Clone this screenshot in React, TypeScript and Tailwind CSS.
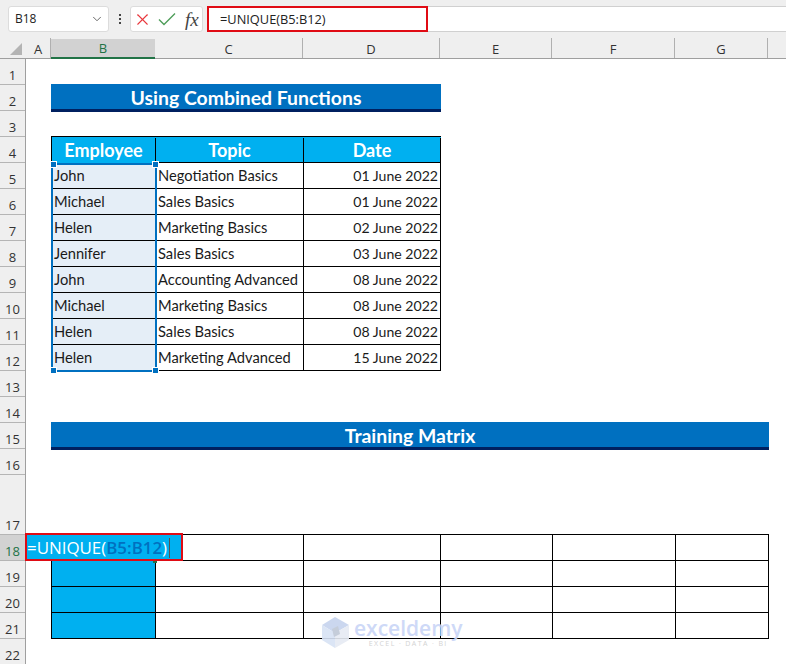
import React from 'react';
import { ChevronDown, X } from 'lucide-react';

const ui = 'font-["Open_Sans",sans-serif]';
const cellFont = 'font-["Lato",sans-serif]';

const employees: [string, string, string][] = [
  ['John', 'Negotiation Basics', '01 June 2022'],
  ['Michael', 'Sales Basics', '01 June 2022'],
  ['Helen', 'Marketing Basics', '02 June 2022'],
  ['Jennifer', 'Sales Basics', '03 June 2022'],
  ['John', 'Accounting Advanced', '08 June 2022'],
  ['Michael', 'Marketing Basics', '08 June 2022'],
  ['Helen', 'Sales Basics', '08 June 2022'],
  ['Helen', 'Marketing Advanced', '15 June 2022'],
];

const columns = [
  { label: 'A', w: 'w-[25px]' },
  { label: 'B', w: 'w-[104px]', active: true },
  { label: 'C', w: 'w-[148px]' },
  { label: 'D', w: 'w-[137px]' },
  { label: 'E', w: 'w-[112px]' },
  { label: 'F', w: 'w-[123px]' },
  { label: 'G', w: 'w-[93px]' },
];

const rowNumbers = Array.from({ length: 22 }, (_, i) => i + 1);

function FormulaBar() {
  return (
    <div className={`flex h-[32px] items-stretch bg-[#efefef] pt-[6px] pl-[8px] ${ui}`}>
      <div className="flex w-[101px] items-center justify-between rounded-[3px] border border-[#dcdcdc] bg-white pr-[4px] pl-[6px] text-[12px] text-[#222]">
        B18
        <ChevronDown size={14} strokeWidth={1.5} className="text-[#555]" />
      </div>
      <div className="flex w-[21px] flex-col items-center justify-center gap-[2px]">
        <span className="h-[2px] w-[2px] bg-[#444]" />
        <span className="h-[2px] w-[2px] bg-[#444]" />
        <span className="h-[2px] w-[2px] bg-[#444]" />
      </div>
      <div className="flex w-[73px] items-center rounded-[3px] border border-[#dcdcdc] bg-white pl-[2px]">
        <X size={19} strokeWidth={1.4} className="text-[#e8383d]" />
        <svg width="18" height="14" viewBox="0 0 18 14" className="ml-[6px]">
          <path d="M1 7.5 L6 12.5 L17 1.5" fill="none" stroke="#4f9e5a" strokeWidth="1.4" />
        </svg>
        <span className='ml-[9px] font-["Liberation_Serif",serif] text-[19px] leading-none text-[#444] italic'>fx</span>
      </div>
      <div className="ml-[4px] flex flex-1 border-t border-b border-t-[#d0d0d0] border-b-[#d0d0d0] bg-white">
        <div className="-my-px flex w-[221px] items-center border-2 border-[#e00b14] pt-px pl-[11px] text-[12.8px] text-[#222]">
          =UNIQUE(B5:B12)
        </div>
      </div>
    </div>
  );
}

function ColumnHeader() {
  return (
    <div className={`flex h-[27px] items-end border-b border-[#9f9f9f] bg-[#efefef] text-[13px] leading-[16px] text-[#333] ${ui}`}>
      <div className="relative h-full w-[26px] border-r border-transparent">
        <span className="absolute right-[3px] bottom-[3px] h-0 w-0 border-b-[12px] border-l-[12px] border-b-[#b4b4b4] border-l-transparent" />
      </div>
      {columns.map((c) =>
        c.active ? (
          <div
            key={c.label}
            className={`-mb-px flex h-[20px] items-center justify-center border-b-2 border-[#217346] bg-[#d2d2d2] text-[#217346] ${c.w}`}
          >
            {c.label}
          </div>
        ) : (
          <div key={c.label} className={`flex h-[20px] items-center justify-center border-r border-[#b0b0b0] pt-px ${c.w}`}>
            {c.label}
          </div>
        ),
      )}
    </div>
  );
}

function RowGutter() {
  return (
    <div className={`w-[26px] shrink-0 border-r border-[#9f9f9f] bg-[#efefef] text-[13px] leading-[16px] text-[#333] ${ui}`}>
      {rowNumbers.map((n) => (
        <div
          key={n}
          className={`flex items-end justify-center border-b border-[#b5b5b5] pb-px ${n === 17 ? 'h-[60px]' : 'h-[26px]'} ${n === 18 ? 'bg-[#d2d2d2] text-[#217346]' : ''}`}
        >
          {n}
        </div>
      ))}
    </div>
  );
}

function Banner({ title, width }: { title: string; width: string }) {
  return (
    <div
      className={`flex h-[28px] items-center justify-center border-b-[3px] border-[#002060] bg-[#0070c0] pt-[2px] text-[19.4px] font-bold text-white ${width} ${cellFont}`}
    >
      {title}
    </div>
  );
}

function Handle({ pos }: { pos: string }) {
  return <span className={`absolute h-[7px] w-[7px] border border-white bg-[#0070c0] ${pos}`} />;
}

function EmployeeTable() {
  return (
    <div className={`relative w-[390px] border-t border-l border-black text-[14.7px] text-[#1a1a1a] ${cellFont}`}>
      <div className="flex h-[26px] bg-[#00b0f0] pt-px text-[18px] font-bold text-white">
        <div className="flex w-[104px] items-center justify-center border-r border-black">Employee</div>
        <div className="flex w-[148px] items-center justify-center border-r border-b border-black">Topic</div>
        <div className="flex w-[137px] items-center justify-center border-r border-b border-black">Date</div>
      </div>
      {employees.map(([name, topic, date], i) => (
        <div key={i} className="flex h-[26px]">
          <div className="flex w-[104px] items-center border-r border-b border-black bg-[#e5eef7] pl-[2px]">{name}</div>
          <div className="flex w-[148px] items-center border-r border-b border-black pl-[2px]">{topic}</div>
          <div className="flex w-[137px] items-center justify-end border-r border-b border-black pr-[2px] text-[14.1px]">{date}</div>
        </div>
      ))}
      {/* range selection B5:B12 */}
      <div className="pointer-events-none absolute top-[26px] -left-px h-[209px] w-[106px] border-2 border-[#0070c0]">
        <Handle pos="-top-[4px] -left-[3px]" />
        <Handle pos="-top-[4px] -right-[4px]" />
        <Handle pos="-bottom-[4px] -left-[3px]" />
        <Handle pos="-bottom-[4px] -right-[4px]" />
      </div>
    </div>
  );
}

function MatrixTable() {
  const rest = ['w-[148px]', 'w-[137px]', 'w-[112px]', 'w-[123px]', 'w-[93px]'];
  return (
    <div className="w-[718px] border-t border-l border-black">
      {[18, 19, 20, 21].map((r) => (
        <div key={r} className="flex h-[26px]">
          <div className="w-[104px] border-r border-b border-black bg-[#00b0f0] last:border-b-0" />
          {rest.map((w) => (
            <div key={w} className={`border-r border-b border-black ${w}`} />
          ))}
        </div>
      ))}
    </div>
  );
}

function Watermark() {
  return (
    <div className="pointer-events-none absolute top-[616px] left-[321px] flex opacity-90">
      <svg width="30" height="32" viewBox="0 0 30 32">
        <path d="M14 1 L28 9 L14 17 L1 9 Z" fill="#c6d3ee" />
        <path d="M1 9 L14 17 L14 32 L1 24 Z" fill="#d8e3f5" />
        <path d="M28 9 L14 17 L14 32 L28 24 Z" fill="#e6ebf3" />
        <path d="M11 13 L17 10 L19 18 L13 21 Z" fill="#bfc8d6" />
      </svg>
      <div className="ml-[3px] flex flex-col items-center">
        <span className='font-["Open_Sans",sans-serif] text-[21px] leading-[24px] font-semibold text-[#c9d5f7]'>exceldemy</span>
        <span className='font-["Open_Sans",sans-serif] text-[7px] leading-[8px] tracking-[1.4px] text-[#cfcfcf]'>EXCEL · DATA · BI</span>
      </div>
    </div>
  );
}

export default function App() {
  return (
    <div className="relative h-[664px] w-[786px] overflow-hidden bg-white">
      <FormulaBar />
      <ColumnHeader />
      <div className="flex">
        <RowGutter />
        <div className="pl-[25px]">
          <div className="h-[25px]" />
          <Banner title="Using Combined Functions" width="w-[390px]" />
          <div className="h-[24px]" />
          <EmployeeTable />
          <div className="h-[51px]" />
          <Banner title="Training Matrix" width="w-[718px]" />
          <div className="h-[84px]" />
          <MatrixTable />
        </div>
      </div>

      {/* cell B18 being edited, spills over the row header */}
      <span className="absolute top-[559px] left-[153px] h-[4px] w-[4px] bg-[#217346]" />
      <div className={`absolute top-[533px] left-[25px] flex h-[28px] w-[158px] items-center border-2 border-[#e00b14] bg-[#00b0f0] pt-[2px] text-[16.9px] text-white ${ui}`}>
        =UNIQUE(<span className="font-semibold text-[#0070c0]">B5:B12</span>)
        <span className="ml-[2px] h-[20px] w-px bg-[#555]" />
      </div>
      <Watermark />
    </div>
  );
}
